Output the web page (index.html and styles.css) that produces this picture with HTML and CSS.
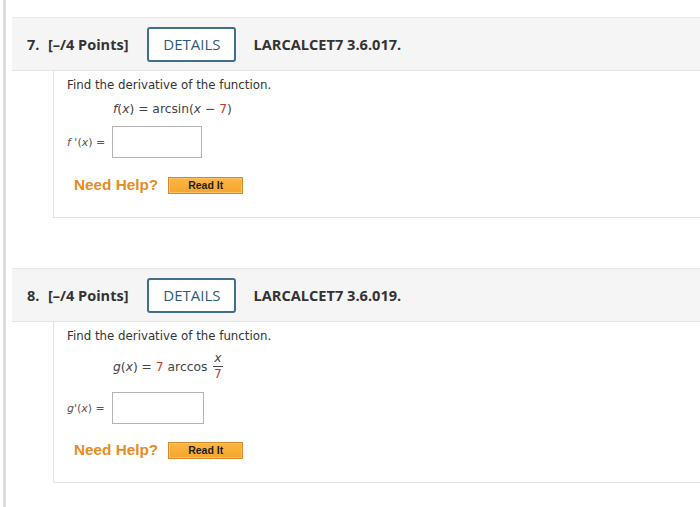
FILE: index.html
```html
<!DOCTYPE html>
<html>
<head>
<meta charset="utf-8">
<link rel="stylesheet" href="styles.css">
</head>
<body>
<div class="page">
  <section class="question">
    <div class="q-head">
      <span class="q-num">7.</span>
      <span class="q-points">[–/4 Points]</span>
      <span class="details-btn">DETAILS</span>
      <span class="q-code">LARCALCET7 3.6.017.</span>
    </div>
    <div class="q-body">
      <p class="prompt">Find the derivative of the function.</p>
      <div class="formula"><i>f</i>(<i>x</i>) = arcsin(<i>x</i> − <span class="red">7</span>)</div>
      <div class="answer-row">
        <span class="lhs"><i>f</i> '(<i>x</i>) =</span>
        <span class="answer-box"></span>
      </div>
      <div class="help-row">
        <span class="need-help">Need Help?</span>
        <span class="read-it">Read It</span>
      </div>
    </div>
  </section>

  <section class="question second">
    <div class="q-head">
      <span class="q-num">8.</span>
      <span class="q-points">[–/4 Points]</span>
      <span class="details-btn">DETAILS</span>
      <span class="q-code">LARCALCET7 3.6.019.</span>
    </div>
    <div class="q-body">
      <p class="prompt">Find the derivative of the function.</p>
      <div class="formula formula-g"><i>g</i>(<i>x</i>) = <span class="red">7</span> arccos <span class="frac"><span class="num"><i>x</i></span><span class="den red">7</span></span></div>
      <div class="answer-row answer-g">
        <span class="lhs"><i>g</i>'(<i>x</i>) =</span>
        <span class="answer-box wide"></span>
      </div>
      <div class="help-row help-g">
        <span class="need-help">Need Help?</span>
        <span class="read-it">Read It</span>
      </div>
    </div>
  </section>
</div>
</body>
</html>
```

FILE: styles.css
```css
html, body {
  margin: 0;
  padding: 0;
  background: #ffffff;
}
body {
  width: 700px;
  height: 507px;
  overflow: hidden;
}
.page {
  height: 507px;
  border-left: 3px solid #dcdce2;
  margin-left: 3px;
  box-sizing: border-box;
  padding: 17px 0 0 6px;
  background: #ffffff;
}
.question.second {
  margin-top: 50px;
}
.q-head {
  display: flex;
  align-items: center;
  height: 52px;
  background: #f5f5f5;
  border-top: 1px solid #e8e8e8;
  border-bottom: 1px solid #e4e4e4;
  padding-left: 15px;
  font-family: "Open Sans", "Liberation Sans", sans-serif;
  color: #333333;
}
.q-num {
  font-weight: 700;
  font-size: 14.5px;
  width: 21px;
}
.q-points {
  font-weight: 700;
  font-size: 14.5px;
}
.details-btn {
  margin-left: 19px;
  width: 85px;
  height: 31px;
  border: 2px solid #3f6f8e;
  border-radius: 3px;
  background: #ffffff;
  color: #2d5a78;
  font-size: 15px;
  display: flex;
  align-items: center;
  justify-content: center;
}
.q-code {
  margin-left: 17px;
  font-weight: 700;
  font-size: 14.6px;
}
.q-body {
  margin-left: 41px;
  border-left: 1px solid #e2e2e2;
  border-bottom: 1px solid #e2e2e2;
  padding: 7px 0 0 13px;
  height: 139px;
  font-family: "DejaVu Sans", Verdana, sans-serif;
  font-size: 11.8px;
  color: #333333;
}
.second .q-body {
  height: 153px;
}
.prompt {
  margin: 0;
  height: 15px;
  line-height: 15px;
}
.formula {
  margin: 9px 0 0 46px;
  line-height: 15px;
  font-size: 12.3px;
  color: #444444;
}
.red {
  color: #c0392b;
}
.answer-row {
  display: flex;
  align-items: center;
  margin-top: 9px;
}
.lhs {
  color: #555555;
  font-size: 11px;
  width: 45px;
}
.answer-box {
  width: 88px;
  height: 30px;
  border: 1px solid #b4b4b4;
  background: #ffffff;
}
.answer-box.wide {
  width: 90px;
}
.help-row {
  display: flex;
  align-items: center;
  margin: 18px 0 0 7px;
}
.need-help {
  font-family: "Liberation Sans", Arial, sans-serif;
  font-weight: 700;
  font-size: 15.3px;
  color: #e58c22;
}
.read-it {
  margin-left: 10px;
  width: 73px;
  height: 15px;
  border: 1px solid #d48a2a;
  box-shadow: inset 0 0 0 1px #fbc264;
  background: linear-gradient(#fbb744, #f6a52c);
  font-family: "Liberation Sans", Arial, sans-serif;
  font-weight: 700;
  font-size: 10.5px;
  color: #1e1e1e;
  display: flex;
  align-items: center;
  justify-content: center;
}
.formula-g {
  margin-top: 8px;
  height: 30px;
  line-height: 30px;
}
.frac {
  display: inline-block;
  vertical-align: middle;
  text-align: center;
  margin-left: 2px;
  position: relative;
  top: -1px;
}
.frac .num,
.frac .den {
  display: block;
}
.frac .num {
  border-bottom: 1px solid #444444;
  padding: 0 1px 2px;
  line-height: 12px;
}
.frac .den {
  line-height: 14px;
}
.answer-g {
  margin-top: 10px;
}
.help-g {
  margin-top: 17px;
}
```
